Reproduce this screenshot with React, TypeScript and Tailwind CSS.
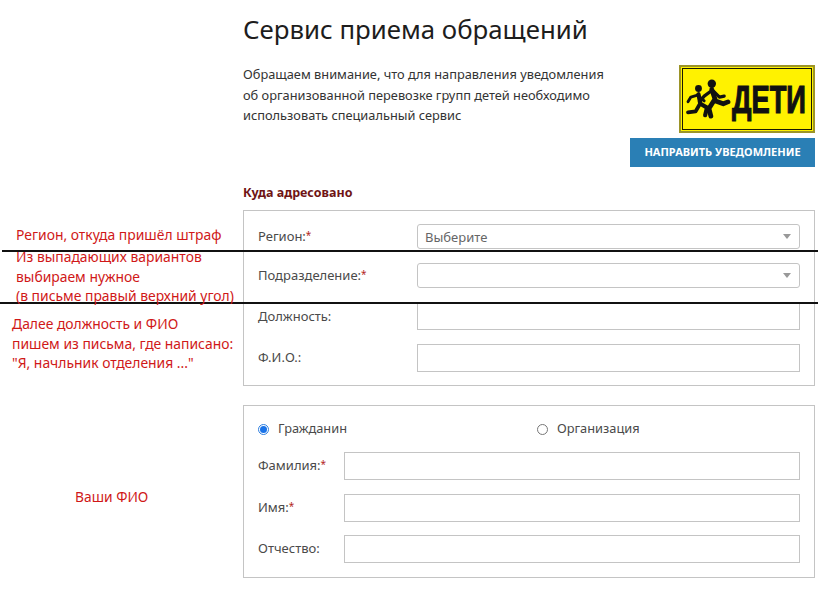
const ui = { fontFamily: '"Noto Sans", sans-serif' };

function Req() {
  return <span className="relative top-[-2px] text-[10px] text-[#b3261e]">*</span>;
}

function Arrow() {
  return (
    <svg width="8" height="5" viewBox="0 0 8 5" className="shrink-0">
      <path d="M0 0h8L4 5z" fill="#999" />
    </svg>
  );
}

function Select({ value, className }: { value?: string; className: string }) {
  return (
    <div className={`flex flex-1 items-center justify-between rounded-[3px] border border-[#c4c4c4] pl-[7px] pr-[8px] ${className}`}>
      <span className="pt-[3px] text-[13px] text-[#666]">{value}</span>
      <Arrow />
    </div>
  );
}

function Row({ label, req, labelW, mt, h, children }: { label: string; req?: boolean; labelW: string; mt: string; h: string; children?: React.ReactNode }) {
  return (
    <div className={`flex items-center ${mt}`}>
      <div className={`shrink-0 text-[13px] text-[#4a4a4a] ${labelW}`}>
        {label}
        {req && <Req />}
      </div>
      {children ?? <div className={`flex-1 border border-[#c4c4c4] ${h}`} />}
    </div>
  );
}

function Runner() {
  return (
    <svg width="46" height="40" viewBox="0 0 46 42" fill="none" stroke="#111" strokeLinecap="round" strokeLinejoin="round" className="shrink-0">
      <circle cx="27" cy="5" r="4.4" fill="#111" stroke="none" />
      <circle cx="13" cy="10" r="3.6" fill="#111" stroke="none" />
      <path d="M27 11l4 12 8 3 5-2" strokeWidth="5" />
      <path d="M27 12l-8 6-5 6M29 13l6 6 5-1" strokeWidth="3.4" />
      <path d="M29 23l-5 8 2 8" strokeWidth="5" />
      <path d="M13 16l2 10 7 4-2 8" strokeWidth="4.4" />
      <path d="M12 17l-7 2-3 5M13 18l6 5" strokeWidth="3" />
      <path d="M14 27l-4 7-8 1" strokeWidth="4" />
    </svg>
  );
}

function Logo() {
  return (
    <div className="flex h-[68px] w-[136px] items-center border-2 border-[#9c9428] bg-[#fff200] pl-[4px] outline outline-1 -outline-offset-4 outline-[#1a1a00]">
      <Runner />
      <span className="ml-[1px] inline-block w-[74px] origin-left scale-x-[0.7] whitespace-nowrap text-[39px] font-bold leading-none text-[#111] [-webkit-text-stroke:1.2px_#111]" style={{ fontFamily: '"Liberation Sans", sans-serif' }}>
        ДЕТИ
      </span>
    </div>
  );
}

export default function App() {
  return (
    <div className="relative h-[600px] w-[818px] overflow-hidden bg-white pl-[243px] pr-[3px]" style={ui}>
      <h1 className="pt-[11px] text-[25.8px] leading-[37px] text-[#1d1d1d]">Сервис приема обращений</h1>

      <div className="mt-[17px] flex justify-between">
        <p className="mt-[-1px] w-[390px] text-[12.8px] leading-[20.6px] text-[#333]">
          Обращаем внимание, что для направления уведомления<br />
          об организованной перевозке групп детей необходимо<br />
          использовать специальный сервис
        </p>
        <div className="flex flex-col items-end">
          <Logo />
          <div className="mt-[5px] flex h-[29px] w-[185px] items-center justify-center bg-[#2a7fb5] text-[11px] font-bold text-white">
            НАПРАВИТЬ УВЕДОМЛЕНИЕ
          </div>
        </div>
      </div>

      <h2 className="mt-[17px] text-[12.5px] font-bold leading-[17px] text-[#6f1414]">Куда адресовано</h2>

      <section className="mt-[9px] h-[176px] border border-[#c4c4c4] pl-[14px] pr-[14px] pt-[13px]">
        <Row label="Регион:" req labelW="w-[159px]" mt="" h="">
          <Select value="Выберите" className="h-[25px]" />
        </Row>
        <Row label="Подразделение:" req labelW="w-[159px]" mt="mt-[14px]" h="">
          <Select className="h-[25px]" />
        </Row>
        <Row label="Должность:" labelW="w-[159px]" mt="mt-[15px]" h="h-[27px]" />
        <Row label="Ф.И.О.:" labelW="w-[159px]" mt="mt-[14px]" h="h-[28px]" />
      </section>

      <section className="mt-[19px] h-[173px] border border-[#c4c4c4] pl-[14px] pr-[14px] pt-[14px]">
        <div className="flex h-[18px] items-center text-[12.8px] text-[#4a4a4a]">
          <label className="flex w-[279px] items-center">
            <span className="flex h-[11px] w-[11px] items-center justify-center rounded-full border border-[#2f7fe0]">
              <span className="h-[7px] w-[7px] rounded-full bg-[#1a73e8]" />
            </span>
            <span className="ml-[9px]">Гражданин</span>
          </label>
          <label className="flex items-center">
            <span className="h-[11px] w-[11px] rounded-full border border-[#777]" />
            <span className="ml-[9px]">Организация</span>
          </label>
        </div>
        <Row label="Фамилия:" req labelW="w-[86px]" mt="mt-[14px]" h="h-[28px]" />
        <Row label="Имя:" req labelW="w-[86px]" mt="mt-[14px]" h="h-[28px]" />
        <Row label="Отчество:" labelW="w-[86px]" mt="mt-[13px]" h="h-[28px]" />
      </section>

      {/* annotations drawn over the form */}
      <div className="absolute left-[2px] top-[250px] h-[2px] w-[816px] bg-[#111]" />
      <div className="absolute left-0 top-[302px] h-[2px] w-[818px] bg-[#111]" />

      <div className="absolute left-[16px] top-[225px] whitespace-nowrap text-[13.9px] leading-[20px] text-[#d01818]">
        Регион, откуда пришёл штраф
      </div>
      <div className="absolute left-[16px] top-[247px] whitespace-nowrap text-[13.9px] leading-[19.7px] text-[#d01818]">
        Из выпадающих вариантов<br />выбираем нужное<br />(в письме правый верхний угол)
      </div>
      <div className="absolute left-[12px] top-[314px] whitespace-nowrap text-[13.9px] leading-[19.7px] text-[#d01818]">
        Далее должность и ФИО<br />пишем из письма, где написано:<br />"Я, начльник отделения ..."
      </div>
      <div className="absolute left-[75px] top-[487px] whitespace-nowrap text-[13.8px] leading-[20px] text-[#d01818]">
        Ваши ФИО
      </div>
    </div>
  );
}
